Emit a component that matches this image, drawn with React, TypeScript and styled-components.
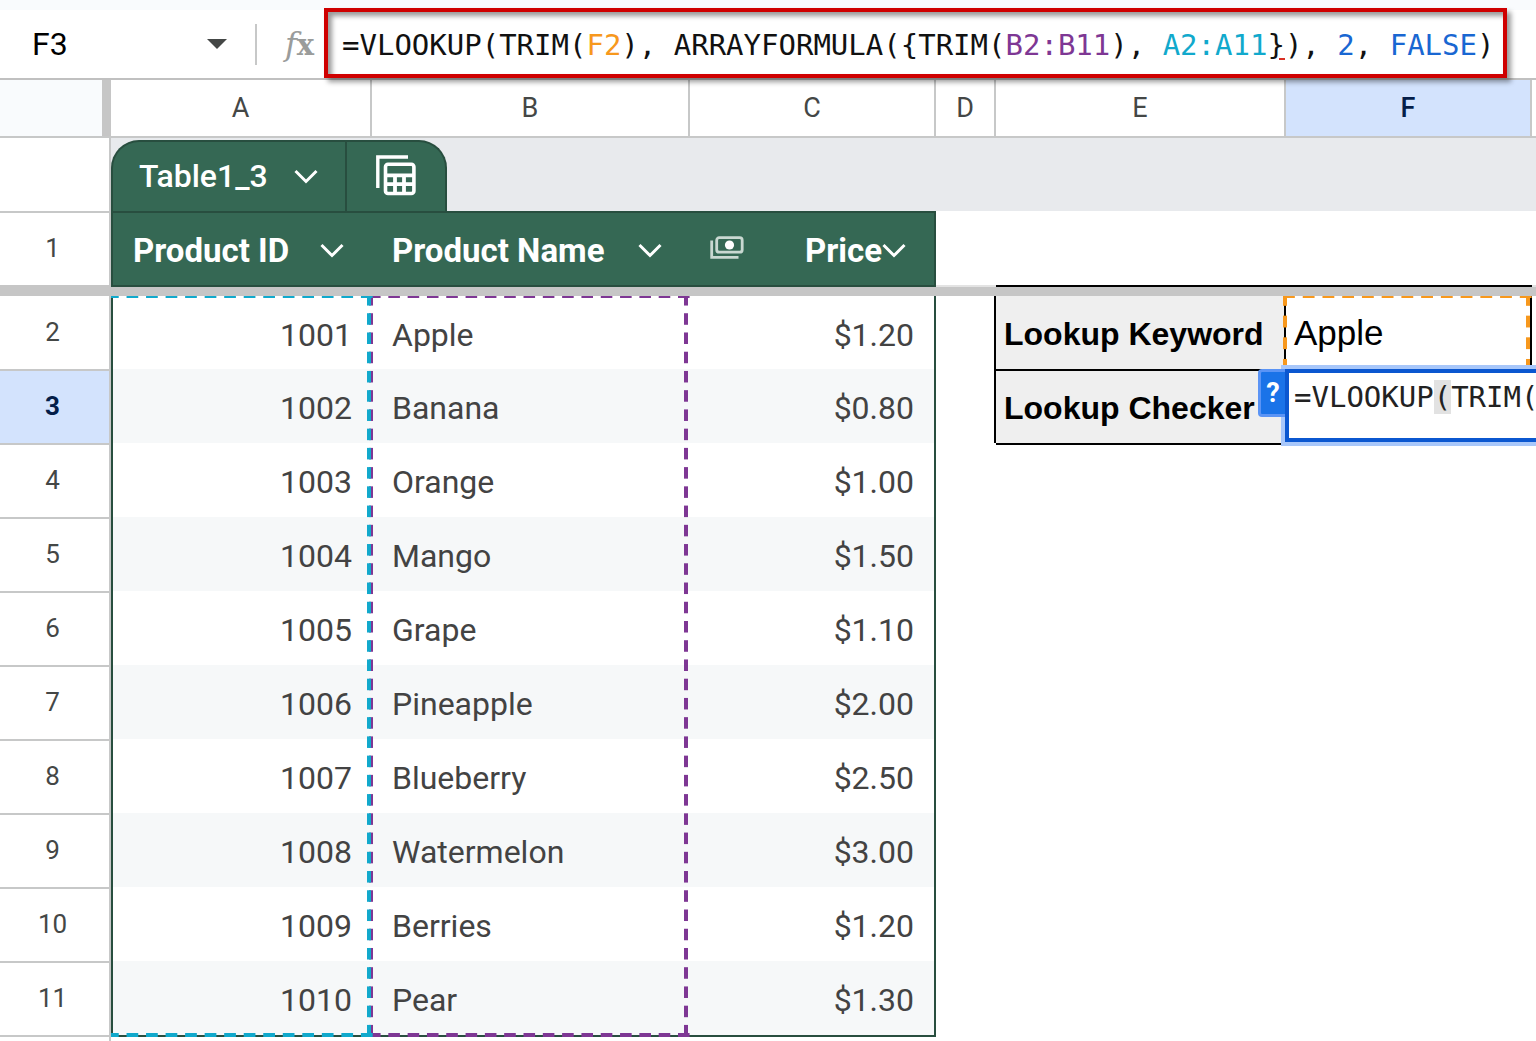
import React from "react";
import styled, { createGlobalStyle, css } from "styled-components";

const color = {
  green: "#356854",
  greenDark: "#284e3f",
  line: "#c7c8c8",
  freeze: "#c6c6c6",
  chrome: "#f9fbfd",
  band: "#f6f8f9",
  selected: "#d3e3fd",
  ink: "#434343",
  cyan: "#11a9cc",
  purple: "#7e3794",
  orange: "#f7981d",
  blue: "#1967d2",
};

const mono = `"DejaVu Sans Mono", "Liberation Mono", monospace`;

const GlobalStyle = createGlobalStyle`
  *, *::before, *::after { box-sizing: border-box; }
  body { margin: 0; background: #fff; font-family: Roboto, sans-serif; color: ${color.ink}; }
  button, input { font: inherit; color: inherit; border: 0; padding: 0; background: none; }
`;

const Page = styled.main`
  min-height: 100vh;
  overflow: hidden;
  background: #fff;
`;

/* ---------- formula bar ---------- */

const FormulaBar = styled.header`
  display: flex;
  align-items: center;
  height: 80px;
  border-top: 10px solid ${color.chrome};
  border-bottom: 2px solid #c0c0c0;
`;

const NameBox = styled.div`
  display: flex;
  align-items: center;
  justify-content: space-between;
  width: 257px;
  height: 41px;
  padding: 0 28px 0 32px;
  border-right: 2px solid ${color.line};
`;

const NameInput = styled.input`
  width: 120px;
  font-size: 32px;
  line-height: 40px;
  color: #000;
  outline: none;
`;

const IconButton = styled.button`
  display: flex;
  flex: none;
  cursor: pointer;
`;

const FxLabel = styled.span`
  display: flex;
  align-items: baseline;
  width: 67px;
  padding-left: 28px;
  font: bold 29px/40px "DejaVu Serif", serif;
  color: #9a9c9b;
`;

const FxItalic = styled.span`
  font-size: 32px;
  font-style: italic;
  font-weight: 400;
`;

const FormulaField = styled.div`
  position: relative;
  z-index: 10;
  flex: none;
  align-self: stretch;
  margin-top: -2px;
  padding: 0 9px 0 14px;
  border: 4px solid #cf0000;
  box-shadow: 4px 4px 5px rgba(0, 0, 0, 0.4), inset 4px 4px 5px rgba(0, 0, 0, 0.4);
  font: 29px/66px ${mono};
  color: #111;
  white-space: pre;
  outline: none;
`;

const Ref = styled.span<{ $color: string }>`
  color: ${(p) => p.$color};
`;

const ErrorMark = styled.span`
  position: relative;
  &::after {
    content: "";
    position: absolute;
    right: 0;
    bottom: 2px;
    width: 6px;
    height: 2px;
    background: #d93025;
  }
`;

/* ---------- sheet ---------- */

const Sheet = styled.table`
  position: relative;
  width: 100%;
  table-layout: fixed;
  border-collapse: separate;
  border-spacing: 0;
`;

const Col = styled.col<{ $width?: number }>`
  width: ${(p) => (p.$width ? `${p.$width}px` : "auto")};
`;

const ColumnHead = styled.th<{ $selected?: boolean }>`
  height: 56px;
  padding: 0;
  border-right: 2px solid ${color.line};
  background: ${(p) => (p.$selected ? color.selected : "#fff")};
  color: ${(p) => (p.$selected ? "#041e49" : "#444746")};
  font-size: 27px;
  font-weight: ${(p) => (p.$selected ? 500 : 400)};
`;

const Corner = styled.th`
  padding: 0;
  background: ${color.chrome};
  border-right: 9px solid ${color.freeze};
`;

const RowHead = styled.th<{ $selected?: boolean; $flush?: boolean }>`
  position: relative;
  z-index: 4;
  padding: 0 4px 2px 0;
  border-top: ${(p) => (p.$flush ? "0" : `2px solid ${color.line}`)};
  border-right: 2px solid ${color.line};
  background: ${(p) => (p.$selected ? color.selected : "#fff")};
  color: ${(p) => (p.$selected ? "#041e49" : "#444746")};
  font-size: 26px;
  font-weight: ${(p) => (p.$selected ? 700 : 400)};
`;

const Row = styled.tr<{ $height: number }>`
  height: ${(p) => p.$height}px;
`;

const TabCell = styled.td`
  padding: 2px 0 0;
  border-top: 2px solid ${color.line};
  background: #e8eaed;
`;

const Tab = styled.div`
  display: flex;
  width: 336px;
  height: 71px;
  border: 2px solid ${color.greenDark};
  border-bottom: 0;
  border-radius: 28px 28px 0 0;
  background: ${color.green};
  color: #fff;
`;

const TabName = styled.div`
  display: flex;
  align-items: center;
  justify-content: space-between;
  width: 234px;
  padding: 0 27px 2px 26px;
  border-right: 2px solid ${color.greenDark};
  font-size: 32px;
  font-weight: 500;
`;

const TabAction = styled.div`
  display: flex;
  flex: 1;
  align-items: center;
  justify-content: center;
  padding-bottom: 2px;
`;

type Edge = { $first?: boolean; $last?: boolean };

const edges = css<Edge>`
  ${(p) => p.$first && `border-left: 2px solid ${color.greenDark};`}
  ${(p) => p.$last && `border-right: 2px solid ${color.greenDark};`}
`;

const FieldHead = styled.th<Edge>`
  padding: 0;
  border-top: 2px solid ${color.greenDark};
  background: ${color.green};
  color: #fff;
  font-size: 33px;
  font-weight: 700;
  ${edges}
`;

const FieldContent = styled.div`
  display: flex;
  align-items: center;
  justify-content: space-between;
  padding: 2px 28px 0 20px;
  white-space: nowrap;
`;

const Joined = styled.span`
  display: flex;
  align-items: center;
`;

const FreezeCell = styled.td<{ $top?: string }>`
  position: relative;
  z-index: 5;
  height: 11px;
  padding: 0;
  border-top: 2px solid ${(p) => p.$top ?? color.freeze};
  background: ${color.freeze};
`;

const DataCell = styled.td<Edge & { $band: boolean; $end?: boolean }>`
  position: relative;
  padding: 4px 20px 0;
  background: ${(p) => (p.$band ? color.band : "#fff")};
  font-size: 32px;
  line-height: 36px;
  text-align: ${(p) => (p.$end ? "right" : "left")};
  white-space: nowrap;
  ${edges}
`;

const LookupHead = styled.th<{ $ruled?: boolean }>`
  padding: 2px 0 0 8px;
  border-top: ${(p) => (p.$ruled ? "2px solid #000" : "0")};
  border-right: 2px solid #000;
  background: #efefef;
  color: #000;
  font: bold 32px/36px "Liberation Sans", Arial, sans-serif;
  text-align: left;
  white-space: nowrap;
`;

const LookupCell = styled.td`
  position: relative;
  padding: 0 0 0 8px;
  border-right: 2px solid #000;
  color: #000;
  font: 35px/40px "Liberation Sans", Arial, sans-serif;
`;

const Blank = styled.td`
  padding: 0;
`;

/* Column D draws the left rule of the lookup block. */
const Gap = styled.td`
  padding: 0;
  border-right: 2px solid #000;
`;

const LookupFoot = styled.td`
  padding: 0;
  border-top: 2px solid #000;
`;

const TableFoot = styled.td`
  height: 6px;
  padding: 0;
  border-top: 2px solid ${color.greenDark};
`;

const dash = (c: string, dir: string) =>
  `linear-gradient(to ${dir}, ${c} 12px, transparent 12px)`;

const RangeOutline = styled.div<{
  $color: string;
  $rows: number;
  $across: number;
  $down: number;
  $left: number;
  $right: number;
  $z: number;
}>`
  position: absolute;
  z-index: ${(p) => p.$z};
  top: -2px;
  left: ${(p) => p.$left}px;
  right: ${(p) => p.$right}px;
  height: ${(p) => p.$rows * 74 + 3}px;
  pointer-events: none;
  background-image: ${(p) =>
    [
      dash(p.$color, "right"),
      dash(p.$color, "right"),
      dash(p.$color, "bottom"),
      dash(p.$color, "bottom"),
    ].join(",")};
  background-size: ${(p) => {
    const h = `calc((100% - 12px) / ${p.$across}) 4px`;
    const v = `4px calc((100% - 12px) / ${p.$down})`;
    return [h, h, v, v].join(",");
  }};
  background-position: left top, left bottom, left top, right 2px top;
  background-repeat: repeat-x, repeat-x, repeat-y, repeat-y;
`;

const EditorCell = styled.td`
  position: relative;
  padding: 0;
`;

const Editor = styled.div`
  position: absolute;
  z-index: 6;
  top: 0;
  left: -1px;
  width: 1200px;
  height: 73px;
  padding: 2px 5px;
  border: 4px solid #0b57d0;
  box-shadow: 0 0 0 4px #a8c7fa;
  background: #fff;
  color: #222;
  font: 29px/44px ${mono};
  white-space: pre;
  outline: none;
`;

const Match = styled.mark`
  background: #e2e2e2;
  color: inherit;
`;

const HelpButton = styled.button`
  position: absolute;
  z-index: 7;
  top: 0;
  right: calc(100% + 1px);
  width: 27px;
  height: 48px;
  && {
    border: 3px solid #5b94f5;
    border-right: 0;
    border-radius: 4px 0 0 4px;
    background: #1a73e8;
    color: #fff;
    font-size: 27px;
    font-weight: 700;
  }
`;

/* ---------- icons ---------- */

const Chevron = () => (
  <svg width="24" height="16" viewBox="0 0 24 16" fill="none" stroke="#fff" strokeWidth="3" aria-hidden="true">
    <path d="M1.500 3 12 13.500 22.500 3" />
  </svg>
);

const TableIcon = () => (
  <svg width="40" height="41" viewBox="0 0 40 41" fill="none" stroke="#fff" aria-hidden="true">
    <path d="M32 2H1.800V33" strokeWidth="3.400" />
    <rect x="9.500" y="9.300" width="28.400" height="29.200" rx="2.500" strokeWidth="3.600" />
    <path d="M9.500 20.300H38M9.500 29.200H38M19 20.300V38M28 20.300V38" strokeWidth="3.800" />
  </svg>
);

const MoneyIcon = () => (
  <svg width="34" height="28" viewBox="0 0 34 28" fill="none" stroke="#c9d8d1" strokeWidth="2.800" aria-hidden="true">
    <rect x="6.700" y="1.700" width="25.500" height="14.500" rx="2.500" />
    <path d="M1.700 4.500V21.300H28.500" />
    <circle cx="19.500" cy="9" r="4.600" fill="#fff" stroke="none" />
  </svg>
);

const Caret = () => (
  <svg width="20" height="12" viewBox="0 0 20 12" fill="#444746" aria-hidden="true">
    <path d="M0 1h20L10 11z" />
  </svg>
);

/* ---------- data ---------- */

const columns = [
  { name: "A", width: 261 },
  { name: "B", width: 318 },
  { name: "C", width: 246 },
  { name: "D", width: 60 },
  { name: "E", width: 290 },
  { name: "F", width: 246 },
];

const products: [number, string, string][] = [
  [1001, "Apple", "$1.20"],
  [1002, "Banana", "$0.80"],
  [1003, "Orange", "$1.00"],
  [1004, "Mango", "$1.50"],
  [1005, "Grape", "$1.10"],
  [1006, "Pineapple", "$2.00"],
  [1007, "Blueberry", "$2.50"],
  [1008, "Watermelon", "$3.00"],
  [1009, "Berries", "$1.20"],
  [1010, "Pear", "$1.30"],
];

const SortButton = ({ label }: { label: string }) => (
  <IconButton aria-label={label}>
    <Chevron />
  </IconButton>
);

function LookupCells({ index }: { index: number }) {
  if (index === 0) {
    return (
      <>
        <Gap />
        <LookupHead scope="row">Lookup Keyword</LookupHead>
        <LookupCell>
          Apple
          <RangeOutline $color={color.orange} $rows={1} $across={12} $down={3} $left={-3} $right={-2} $z={2} />
        </LookupCell>
        <Blank />
      </>
    );
  }
  if (index === 1) {
    return (
      <>
        <Gap />
        <LookupHead scope="row" $ruled>
          Lookup Checker
        </LookupHead>
        <EditorCell>
          <HelpButton aria-label="Formula help">?</HelpButton>
          <Editor role="textbox" aria-label="Cell F3" contentEditable suppressContentEditableWarning>
            =VLOOKUP<Match>(</Match>TRIM(
          </Editor>
        </EditorCell>
        <Blank />
      </>
    );
  }
  if (index === 2) {
    return (
      <>
        <Blank />
        <LookupFoot />
        <Blank colSpan={2} />
      </>
    );
  }
  return <Blank colSpan={4} />;
}

export default function App() {
  return (
    <Page>
      <GlobalStyle />
      <FormulaBar>
        <NameBox>
          <NameInput aria-label="Name box" defaultValue="F3" />
          <IconButton aria-label="Named ranges">
            <Caret />
          </IconButton>
        </NameBox>
        <FxLabel>
          <FxItalic>f</FxItalic>x
        </FxLabel>
        <FormulaField role="textbox" aria-label="Formula" contentEditable suppressContentEditableWarning>
          =VLOOKUP(TRIM(<Ref $color={color.orange}>F2</Ref>), ARRAYFORMULA({"{"}TRIM(
          <Ref $color={color.purple}>B2:B11</Ref>), <Ref $color={color.cyan}>A2:A11</Ref>
          <ErrorMark>{"}"}</ErrorMark>), <Ref $color={color.blue}>2</Ref>, <Ref $color={color.blue}>FALSE</Ref>)
        </FormulaField>
      </FormulaBar>

      <Sheet>
        <colgroup>
          <Col $width={111} />
          {columns.map((c) => (
            <Col key={c.name} $width={c.width} />
          ))}
          <Col />
        </colgroup>
        <thead>
          <tr>
            <Corner aria-label="Select all" />
            {columns.map((c) => (
              <ColumnHead key={c.name} scope="col" $selected={c.name === "F"}>
                {c.name}
              </ColumnHead>
            ))}
            <Blank />
          </tr>
        </thead>
        <tbody>
          <Row $height={75}>
            <RowHead aria-label="Table name row" />
            <TabCell colSpan={7}>
              <Tab>
                <TabName>
                  Table1_3
                  <SortButton label="Table menu" />
                </TabName>
                <TabAction>
                  <IconButton aria-label="Table views">
                    <TableIcon />
                  </IconButton>
                </TabAction>
              </Tab>
            </TabCell>
          </Row>
          <Row $height={74}>
            <RowHead scope="row">1</RowHead>
            <FieldHead $first>
              <FieldContent>
                Product ID
                <SortButton label="Product ID menu" />
              </FieldContent>
            </FieldHead>
            <FieldHead>
              <FieldContent>
                Product Name
                <SortButton label="Product Name menu" />
              </FieldContent>
            </FieldHead>
            <FieldHead $last>
              <FieldContent>
                <MoneyIcon />
                <Joined>
                  Price
                  <SortButton label="Price menu" />
                </Joined>
              </FieldContent>
            </FieldHead>
            <Blank colSpan={4} />
          </Row>
          <tr>
            <FreezeCell />
            <FreezeCell colSpan={3} $top={color.greenDark} />
            <FreezeCell $top="#e3e3e3" />
            <FreezeCell colSpan={2} $top="#000" />
            <FreezeCell $top="#e3e3e3" />
          </tr>
          {products.map(([id, name, price], i) => (
            <Row key={id} $height={i === 0 ? 73 : 74}>
              <RowHead scope="row" $selected={i === 1} $flush={i === 0}>
                {i + 2}
              </RowHead>
              <DataCell $band={i % 2 === 1} $end $first>
                {id}
                {i === 0 && (
                  <RangeOutline $color={color.cyan} $rows={10} $across={13} $down={38} $left={-6} $right={-1} $z={3} />
                )}
              </DataCell>
              <DataCell $band={i % 2 === 1}>
                {name}
                {i === 0 && (
                  <RangeOutline $color={color.purple} $rows={10} $across={16} $down={38} $left={-3} $right={0} $z={2} />
                )}
              </DataCell>
              <DataCell $band={i % 2 === 1} $end $last>
                {price}
              </DataCell>
              <LookupCells index={i} />
            </Row>
          ))}
          <tr>
            <RowHead aria-label="Next row" />
            <TableFoot colSpan={3} />
            <Blank colSpan={4} />
          </tr>
        </tbody>
      </Sheet>
    </Page>
  );
}
